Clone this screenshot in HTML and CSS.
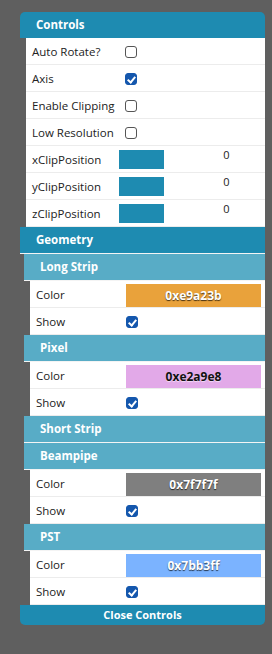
FILE: index.html
```html
<!DOCTYPE html>
<html lang="en">
<head>
    <meta charset="UTF-8">
    <meta name="viewport" content="width=device-width, initial-scale=1.0">
    <title>Controls</title>
    <link rel="stylesheet" href="styles.css">
</head>
<body>
<div class="gui">
    <div class="title main first">Controls</div>
    <ul class="rows top">
        <li class="row"><span class="label">Auto Rotate?</span><span class="check"></span></li>
        <li class="row"><span class="label">Axis</span><span class="check on"></span></li>
        <li class="row"><span class="label">Enable Clipping</span><span class="check"></span></li>
        <li class="row"><span class="label">Low Resolution</span><span class="check"></span></li>
        <li class="row slide"><span class="label">xClipPosition</span><span class="slider"></span><span class="value">0</span></li>
        <li class="row slide"><span class="label">yClipPosition</span><span class="slider"></span><span class="value">0</span></li>
        <li class="row slide"><span class="label">zClipPosition</span><span class="slider"></span><span class="value">0</span></li>
    </ul>

    <div class="title main">Geometry</div>
    <div class="folder">
        <div class="title sub">Long Strip</div>
        <ul class="rows">
            <li class="row"><span class="label">Color</span><span class="swatch light" style="background:#e9a23b">0xe9a23b</span></li>
            <li class="row"><span class="label">Show</span><span class="check on"></span></li>
        </ul>

        <div class="title sub">Pixel</div>
        <ul class="rows">
            <li class="row"><span class="label">Color</span><span class="swatch dark" style="background:#e2a9e8">0xe2a9e8</span></li>
            <li class="row"><span class="label">Show</span><span class="check on"></span></li>
        </ul>

        <div class="title sub">Short Strip</div>

        <div class="title sub">Beampipe</div>
        <ul class="rows">
            <li class="row"><span class="label">Color</span><span class="swatch light" style="background:#7f7f7f">0x7f7f7f</span></li>
            <li class="row"><span class="label">Show</span><span class="check on"></span></li>
        </ul>

        <div class="title sub">PST</div>
        <ul class="rows">
            <li class="row"><span class="label">Color</span><span class="swatch light" style="background:#7bb3ff">0x7bb3ff</span></li>
            <li class="row"><span class="label">Show</span><span class="check on"></span></li>
        </ul>
    </div>

    <div class="close">Close Controls</div>
</div>
</body>
</html>
```

FILE: styles.css
```css
body {
    margin: 0;
    background-color: #5f5f5f;
    font-family: "Open Sans", "DejaVu Sans", sans-serif;
    font-size: 11.5px;
    color: #222;
}

.gui {
    width: 245px;
    margin: 12px 0 0 20px;
}

ul {
    list-style: none;
    margin: 0;
    padding: 0;
}

.title {
    height: 26px;
    line-height: 26px;
    padding-left: 16px;
    color: white;
    font-size: 11.5px;
    font-weight: bold;
    border-bottom: 1px solid #f4f4f4;
}

.title.main {
    background-color: #1e8bb1;
}

.title.first {
    border-bottom: none;
    border-radius: 5px 5px 0 0;
}

.title.sub {
    background-color: #58acc6;
}

.folder {
    margin-left: 4px;
}

.rows {
    margin-left: 6px;
}

.row {
    display: flex;
    align-items: center;
    height: 26px;
    padding-left: 6px;
    background-color: white;
    border-bottom: 1px solid #ececec;
}

.row .label {
    width: 90px;
    flex: none;
}

.rows.top .row .label {
    width: 93px;
}

.rows.top .row.slide .label {
    width: 87px;
}

.check {
    box-sizing: border-box;
    width: 12px;
    height: 12px;
    margin-top: 2px;
    border: 1px solid #555;
    border-radius: 3px;
    background-color: white;
    position: relative;
}

.check.on {
    border-color: #1457ad;
    background-color: #1457ad;
}

.check.on::after {
    content: "";
    position: absolute;
    left: 3px;
    top: 1px;
    width: 3px;
    height: 6px;
    border: solid white;
    border-width: 0 2px 2px 0;
    transform: rotate(40deg);
}

.slider {
    width: 45px;
    height: 19px;
    margin-top: 1px;
    background-color: #1e8bb1;
}

.value {
    flex: 1;
    align-self: flex-start;
    padding: 1px 0 0 24px;
    text-align: center;
    font-size: 11px;
}

.swatch {
    width: 135px;
    height: 23px;
    line-height: 23px;
    align-self: flex-end;
    text-align: center;
    font-size: 12px;
    font-weight: bold;
}

.swatch.light {
    color: white;
    text-shadow: 0 1px 1px rgba(0,0,0,0.7);
}

.swatch.dark {
    color: #111;
    text-shadow: 0 1px 1px rgba(255,255,255,0.6);
}

.close {
    height: 20px;
    line-height: 20px;
    text-align: center;
    color: white;
    font-size: 11px;
    font-weight: bold;
    background-color: #1e8bb1;
    border-radius: 0 0 5px 5px;
}
```
